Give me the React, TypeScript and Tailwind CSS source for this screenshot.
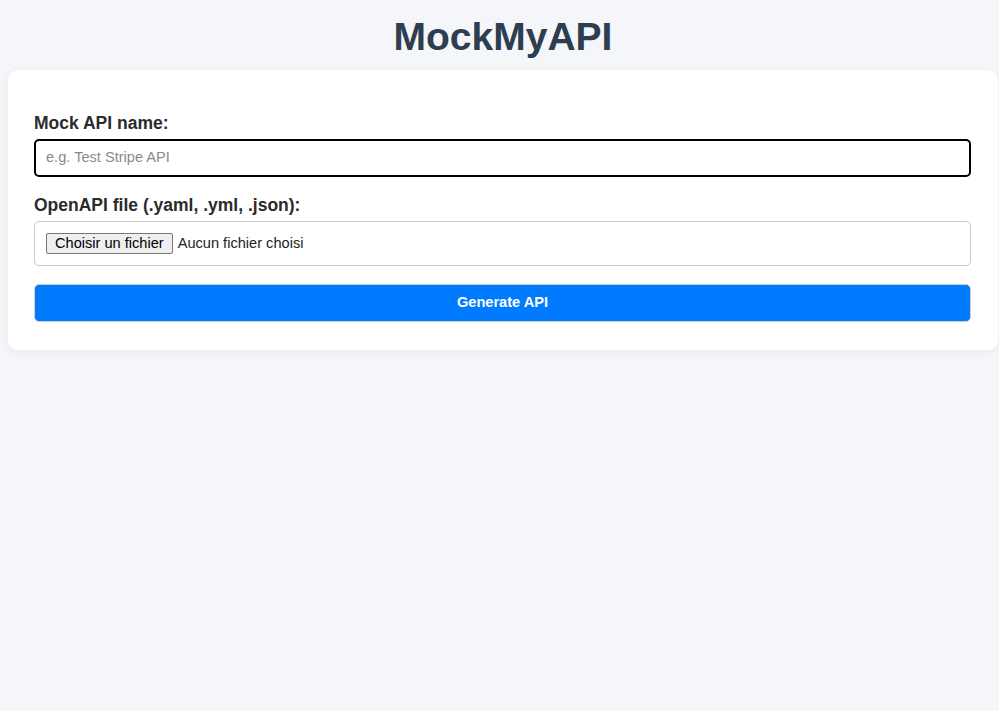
export default function App() {
  return (
    <div className="min-h-[711px] bg-[#f5f6fa] font-['Liberation_Sans',Arial,sans-serif] text-[#333]">
      <h1 className="pt-[14px] pb-[10px] pl-[7px] text-center text-[39px] leading-[46px] font-bold text-[#2c3e50]">
        MockMyAPI
      </h1>
      <div className="mx-[8px] mr-[1px] rounded-[10px] bg-white px-[26px] pr-[27px] pt-[43px] pb-[28px] shadow-[0_2px_8px_rgba(0,0,0,0.06)]">
        <label className="block text-[17.5px] leading-[21px] font-bold text-[#2b2b2b]">Mock API name:</label>
        <div className="mt-[5px] flex h-[38px] items-center rounded-[5px] border-2 border-black px-[10px] text-[14.6px] text-[#8a8a8a]">
          e.g. Test Stripe API
        </div>
        <label className="mt-[18px] block text-[17.5px] leading-[21px] font-bold text-[#2b2b2b]">
          OpenAPI file (.yaml, .yml, .json):
        </label>
        <div className="mt-[5px] flex h-[45px] items-center gap-[5px] rounded-[5px] border border-[#c8c8c8] px-[11px] text-[14.6px] text-[#222]">
          <span className="flex h-[21px] items-center rounded-[2px] border border-[#767676] bg-[#efefef] px-[8px] text-[14.6px] text-black">
            Choisir un fichier
          </span>
          <span>Aucun fichier choisi</span>
        </div>
        <button className="mt-[18px] flex h-[38px] w-full items-center justify-center rounded-[5px] border border-[#cfcfcf] bg-[#007bff] text-[14.6px] font-bold text-white">
          Generate API
        </button>
      </div>
    </div>
  );
}
